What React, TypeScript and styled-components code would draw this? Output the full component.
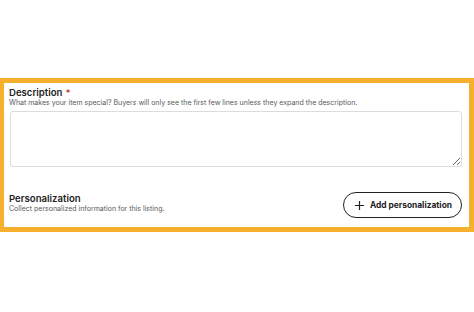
import styled, { createGlobalStyle } from "styled-components";

const GlobalStyle = createGlobalStyle`
  html, body {
    margin: 0;
    padding: 0;
    background: #fff;
  }
  body {
    font-family: Inter, "Liberation Sans", sans-serif;
    color: #222;
  }
`;

const Page = styled.div`
  width: 474px;
  height: 312px;
  padding-top: 78px;
  box-sizing: border-box;
`;

const Frame = styled.section`
  width: 474px;
  height: 154px;
  box-sizing: border-box;
  border: 5px solid #f6b12c;
  border-left-width: 4px;
  padding: 4px 7px 0 5px;
  display: flex;
  flex-direction: column;
`;

const Label = styled.h4`
  margin: 0;
  font-size: 9.6px;
  font-weight: 600;
  line-height: 11px;
  color: #222;

  .req {
    color: #c53c2d;
    margin-left: 3px;
  }
`;

const Hint = styled.p`
  margin: 0;
  font-size: 7px;
  line-height: 10px;
  color: #595959;
`;

const TextArea = styled.textarea`
  display: block;
  margin: 3px 0 0 1px;
  width: 452px;
  height: 56px;
  box-sizing: border-box;
  border: 1px solid #dcdcdc;
  border-radius: 3px;
  background: #fff;
  resize: vertical;
  outline: none;
`;

const Row = styled.div`
  display: flex;
  align-items: center;
  justify-content: space-between;
  margin-top: 25px;
`;

const Info = styled.div`
  padding-bottom: 4px;
`;

const AddButton = styled.button`
  display: flex;
  align-items: center;
  gap: 5px;
  height: 26px;
  padding: 0 9px 0 10px;
  border: 1.5px solid #222;
  border-radius: 13px;
  background: #fff;
  color: #222;
  font-family: Inter, "Liberation Sans", sans-serif;
  font-size: 8.4px;
  font-weight: 700;
  cursor: pointer;
`;

const PlusIcon = () => (
  <svg width="11" height="11" viewBox="0 0 12 12" fill="none">
    <path d="M6 1v10M1 6h10" stroke="#222" strokeWidth="1.3" />
  </svg>
);

export default function App() {
  return (
    <Page>
      <GlobalStyle />
      <Frame>
        <Label>
          Description<span className="req">*</span>
        </Label>
        <Hint>
          What makes your item special? Buyers will only see the first few lines unless they expand the
          description.
        </Hint>
        <TextArea />
        <Row>
          <Info>
            <Label>Personalization</Label>
            <Hint>Collect personalized information for this listing.</Hint>
          </Info>
          <AddButton>
            <PlusIcon />
            Add personalization
          </AddButton>
        </Row>
      </Frame>
    </Page>
  );
}
